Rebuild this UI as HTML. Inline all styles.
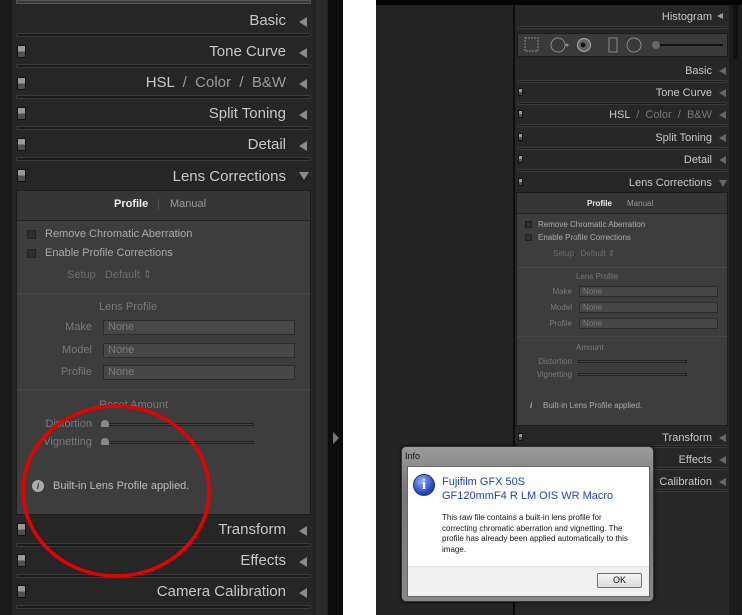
<!DOCTYPE html>
<html><head><meta charset="utf-8"><style>
*{margin:0;padding:0;box-sizing:border-box}
body{width:742px;height:615px;overflow:hidden;background:#fff;position:relative;font-family:"Liberation Sans",sans-serif}
.a{position:absolute}
.t{position:absolute;white-space:nowrap}
.hl{position:absolute;text-align:right;color:#c8c8c8}
.sep{position:absolute;border:1px solid #3a3a3a;border-radius:2px;background:#1a1a1a}
.sw{position:absolute;background:linear-gradient(#9a9a9a 50%,#505050 50%);border:1px solid #111}
.tri{position:absolute;width:0;height:0;border-top:5px solid transparent;border-bottom:5px solid transparent;border-right:8px solid #8a8a8a}
.cb{position:absolute;border:1px solid #222;background:#303030}
.sel{position:absolute;border:1px solid #2c2c2c;background:#474747;color:#7b7b7b}
.lb{position:absolute;text-align:right;color:#7a7a7a}
</style></head><body>
<!-- LEFT -->
<div class="a" style="left:0;top:0;width:343px;height:615px;background:#222"></div>
<div class="a" style="left:0;top:0;width:12px;height:615px;background:#1a1a1a"></div>
<div class="a" style="left:12px;top:0;width:300px;height:615px;background:#262626"></div>
<div class="a" style="left:316px;top:0;width:11px;height:615px;background:#2a2a2a"></div>
<div class="a" style="left:328px;top:0;width:15px;height:615px;background:#0c0c0c"></div>
<div class="a" style="left:333px;top:432px;width:0;height:0;border-top:6px solid transparent;border-bottom:6px solid transparent;border-left:6px solid #777"></div>
<div class="a" style="left:16px;top:0;width:295px;height:4px;background:#3a3a3a;border:1px solid #555"></div>

<div style="font-size:15px">
<div class="hl" style="right:456px;top:12px">Basic</div>
<div class="hl" style="right:456px;top:43px">Tone Curve</div>
<div class="hl" style="right:456px;top:74px;color:#9a9a9a"><span style="color:#c8c8c8">HSL</span> &nbsp;/&nbsp; Color &nbsp;/&nbsp; B&amp;W</div>
<div class="hl" style="right:456px;top:105px">Split Toning</div>
<div class="hl" style="right:456px;top:136px">Detail</div>
<div class="hl" style="right:456px;top:168px">Lens Corrections</div>
<div class="hl" style="right:456px;top:521px">Transform</div>
<div class="hl" style="right:456px;top:552px">Effects</div>
<div class="hl" style="right:456px;top:583px">Camera Calibration</div>
</div>
<div class="tri" style="left:299px;top:17px"></div>
<div class="tri" style="left:299px;top:48px"></div>
<div class="tri" style="left:299px;top:79px"></div>
<div class="tri" style="left:299px;top:110px"></div>
<div class="tri" style="left:299px;top:141px"></div>
<div class="a" style="left:299px;top:172px;border-left:5px solid transparent;border-right:5px solid transparent;border-top:8px solid #8a8a8a"></div>
<div class="tri" style="left:299px;top:526px"></div>
<div class="tri" style="left:299px;top:557px"></div>
<div class="tri" style="left:299px;top:588px"></div>
<div class="sep" style="left:16px;top:33px;width:295px;height:4px"></div>
<div class="sep" style="left:16px;top:64px;width:295px;height:4px"></div>
<div class="sep" style="left:16px;top:95px;width:295px;height:4px"></div>
<div class="sep" style="left:16px;top:126px;width:295px;height:4px"></div>
<div class="sep" style="left:16px;top:157px;width:295px;height:4px"></div>
<div class="sep" style="left:16px;top:543px;width:295px;height:4px"></div>
<div class="sep" style="left:16px;top:574px;width:295px;height:4px"></div>
<div class="sep" style="left:16px;top:605px;width:295px;height:4px"></div>
<div class="sw" style="left:17px;top:45px;width:9px;height:13px"></div>
<div class="sw" style="left:17px;top:77px;width:9px;height:13px"></div>
<div class="sw" style="left:17px;top:107px;width:9px;height:13px"></div>
<div class="sw" style="left:17px;top:138px;width:9px;height:13px"></div>
<div class="sw" style="left:17px;top:169px;width:9px;height:13px"></div>
<div class="sw" style="left:17px;top:523px;width:9px;height:13px"></div>
<div class="sw" style="left:17px;top:554px;width:9px;height:13px"></div>
<div class="sw" style="left:17px;top:585px;width:9px;height:13px"></div>

<div class="a" style="left:16px;top:190px;width:295px;height:325px;background:#3d3d3d;border:1px solid #1c1c1c"></div>
<div class="a" style="left:17px;top:191px;width:293px;height:30px;background:#363636;border-bottom:1px solid #222"></div>
<div class="t" style="left:114px;top:198px;font-size:11px;color:#eee;font-weight:bold">Profile</div>
<div class="t" style="left:157px;top:198px;font-size:11px;color:#555">|</div>
<div class="t" style="left:170px;top:198px;font-size:11px;color:#9a9a9a">Manual</div>
<div style="font-size:11px">
<div class="cb" style="left:27px;top:230px;width:9px;height:9px"></div>
<div class="t" style="left:45px;top:228px;color:#aaa">Remove Chromatic Aberration</div>
<div class="cb" style="left:27px;top:249px;width:9px;height:9px"></div>
<div class="t" style="left:45px;top:247px;color:#aaa">Enable Profile Corrections</div>
<div class="t" style="left:67px;top:268px;color:#6e6e6e">Setup &nbsp; Default ⇕</div>
<div class="a" style="left:17px;top:293px;width:293px;height:1px;background:#474747"></div>
<div class="t" style="left:99px;top:301px;color:#7a7a7a">Lens Profile</div>
<div class="lb" style="right:650px;top:321px">Make</div>
<div class="lb" style="right:650px;top:344px">Model</div>
<div class="lb" style="right:650px;top:366px">Profile</div>
<div class="sel" style="left:103px;top:320px;width:192px;height:15px;padding-left:4px;line-height:13px">None</div>
<div class="sel" style="left:103px;top:343px;width:192px;height:15px;padding-left:4px;line-height:13px">None</div>
<div class="sel" style="left:103px;top:365px;width:192px;height:15px;padding-left:4px;line-height:13px">None</div>
<div class="a" style="left:17px;top:389px;width:293px;height:1px;background:#474747"></div>
<div class="t" style="left:99px;top:399px;color:#7a7a7a">Reset Amount</div>
<div class="lb" style="right:650px;top:418px">Distortion</div>
<div class="lb" style="right:650px;top:436px">Vignetting</div>
<div class="a" style="left:101px;top:423px;width:153px;height:3px;border:1px solid #222;border-radius:2px;background:#444"></div>
<div class="a" style="left:101px;top:441px;width:153px;height:3px;border:1px solid #222;border-radius:2px;background:#444"></div>
<div class="a" style="left:101px;top:420px;width:8px;height:7px;border-radius:4px 4px 1px 1px;background:#8a8a8a"></div>
<div class="a" style="left:101px;top:438px;width:8px;height:7px;border-radius:4px 4px 1px 1px;background:#8a8a8a"></div>
<div class="a" style="left:32px;top:480px;width:12px;height:12px;border-radius:50%;background:#aaa;color:#3d3d3d;font-size:9px;font-style:italic;font-weight:bold;text-align:center;line-height:12px">i</div>
<div class="t" style="left:53px;top:480px;color:#bbb">Built-in Lens Profile applied.</div>
</div>
<svg class="a" style="left:0;top:0" width="345" height="615"><ellipse cx="116" cy="491" rx="93" ry="85" fill="none" stroke="#e60000" stroke-width="3.5"/></svg>

<!-- RIGHT -->
<div class="a" style="left:376px;top:0;width:366px;height:615px;background:#242424"></div>
<div class="a" style="left:376px;top:0;width:366px;height:5px;background:#050505"></div>
<div class="a" style="left:513px;top:5px;width:2px;height:610px;background:#0e0e0e"></div>
<div class="a" style="left:515px;top:5px;width:214px;height:610px;background:#272727"></div>
<div class="a" style="left:729px;top:5px;width:13px;height:610px;background:#1c1c1c"></div>
<div class="a" style="left:733px;top:5px;width:5px;height:54px;background:#111"></div>
<div style="font-size:11px">
<div class="hl" style="right:30px;top:11px">Histogram</div>
<div class="hl" style="right:30px;top:65px">Basic</div>
<div class="hl" style="right:30px;top:87px">Tone Curve</div>
<div class="hl" style="right:30px;top:109px;color:#777"><span style="color:#c8c8c8">HSL</span> &nbsp;/&nbsp; Color &nbsp;/&nbsp; B&amp;W</div>
<div class="hl" style="right:30px;top:132px">Split Toning</div>
<div class="hl" style="right:30px;top:154px">Detail</div>
<div class="hl" style="right:30px;top:177px">Lens Corrections</div>
<div class="hl" style="right:30px;top:432px">Transform</div>
<div class="hl" style="right:30px;top:454px">Effects</div>
<div class="hl" style="right:30px;top:476px">Calibration</div>
</div>
<div style="position:absolute;left:0;top:0">
<div class="tri" style="left:717px;top:13px;border-width:3px 0 3px 6px;border-right:6px solid #999;border-top:3px solid transparent;border-bottom:3px solid transparent"></div>
</div>
<div class="tri" style="left:719px;top:67px;border-right-width:7px;border-top-width:4px;border-bottom-width:4px;border-right-color:#666"></div>
<div class="tri" style="left:719px;top:89px;border-right-width:7px;border-top-width:4px;border-bottom-width:4px;border-right-color:#666"></div>
<div class="tri" style="left:719px;top:111px;border-right-width:7px;border-top-width:4px;border-bottom-width:4px;border-right-color:#666"></div>
<div class="tri" style="left:719px;top:134px;border-right-width:7px;border-top-width:4px;border-bottom-width:4px;border-right-color:#666"></div>
<div class="tri" style="left:719px;top:156px;border-right-width:7px;border-top-width:4px;border-bottom-width:4px;border-right-color:#666"></div>
<div class="a" style="left:719px;top:180px;border-left:4px solid transparent;border-right:4px solid transparent;border-top:7px solid #666"></div>
<div class="tri" style="left:719px;top:434px;border-right-width:7px;border-top-width:4px;border-bottom-width:4px;border-right-color:#666"></div>
<div class="tri" style="left:719px;top:456px;border-right-width:7px;border-top-width:4px;border-bottom-width:4px;border-right-color:#666"></div>
<div class="tri" style="left:719px;top:478px;border-right-width:7px;border-top-width:4px;border-bottom-width:4px;border-right-color:#666"></div>
<div class="sep" style="left:517px;top:26px;width:210px;height:3px"></div>
<div class="sep" style="left:517px;top:80px;width:210px;height:3px"></div>
<div class="sep" style="left:517px;top:102px;width:210px;height:3px"></div>
<div class="sep" style="left:517px;top:124px;width:210px;height:3px"></div>
<div class="sep" style="left:517px;top:147px;width:210px;height:3px"></div>
<div class="sep" style="left:517px;top:169px;width:210px;height:3px"></div>
<div class="sep" style="left:517px;top:445px;width:210px;height:3px"></div>
<div class="sep" style="left:517px;top:467px;width:210px;height:3px"></div>
<div class="sep" style="left:517px;top:489px;width:210px;height:3px"></div>
<div class="sw" style="left:518px;top:88px;width:5px;height:8px"></div>
<div class="sw" style="left:518px;top:110px;width:5px;height:8px"></div>
<div class="sw" style="left:518px;top:133px;width:5px;height:8px"></div>
<div class="sw" style="left:518px;top:155px;width:5px;height:8px"></div>
<div class="sw" style="left:518px;top:178px;width:5px;height:8px"></div>
<div class="sw" style="left:518px;top:433px;width:5px;height:8px"></div>
<!-- toolbar -->
<div class="a" style="left:517px;top:33px;width:211px;height:24px;background:#3a3a3a;border:1px solid #1c1c1c"></div>
<svg class="a" style="left:517px;top:33px" width="211" height="24">
<g fill="none" stroke="#888" stroke-width="1">
<rect x="8" y="5" width="13" height="13" stroke-dasharray="2 1"/>
<circle cx="41" cy="12" r="7"/><circle cx="50" cy="12" r="1" fill="#888"/>
<circle cx="67" cy="12" r="6.5" fill="#666" stroke="#aaa"/>
<rect x="92" y="5" width="8" height="14"/>
<circle cx="117" cy="12" r="7"/>
<line x1="140" y1="12" x2="206" y2="12" stroke="#111" stroke-width="2"/>
</g>
<circle cx="66" cy="12" r="2.5" fill="#111"/>
<circle cx="139" cy="12" r="4" fill="#666"/>
</svg>
<!-- content -->
<div class="a" style="left:516px;top:192px;width:212px;height:234px;background:#3d3d3d;border:1px solid #1c1c1c"></div>
<div class="a" style="left:517px;top:193px;width:210px;height:21px;background:#363636;border-bottom:1px solid #222"></div>
<div style="font-size:8px">
<div class="t" style="left:587px;top:199px;color:#eee;font-weight:bold">Profile</div>
<div class="t" style="left:627px;top:199px;color:#999">Manual</div>
<div class="cb" style="left:525px;top:221px;width:7px;height:7px"></div>
<div class="t" style="left:538px;top:220px;color:#aaa">Remove Chromatic Aberration</div>
<div class="cb" style="left:525px;top:234px;width:7px;height:7px"></div>
<div class="t" style="left:538px;top:233px;color:#aaa">Enable Profile Corrections</div>
<div class="t" style="left:553px;top:249px;color:#6e6e6e">Setup &nbsp; Default ⇕</div>
<div class="a" style="left:517px;top:267px;width:210px;height:1px;background:#474747"></div>
<div class="t" style="left:576px;top:272px;color:#7a7a7a">Lens Profile</div>
<div class="lb" style="right:170px;top:287px">Make</div>
<div class="lb" style="right:170px;top:303px">Model</div>
<div class="lb" style="right:170px;top:319px">Profile</div>
<div class="sel" style="left:579px;top:286px;width:139px;height:11px;padding-left:3px;line-height:9px">None</div>
<div class="sel" style="left:579px;top:302px;width:139px;height:11px;padding-left:3px;line-height:9px">None</div>
<div class="sel" style="left:579px;top:318px;width:139px;height:11px;padding-left:3px;line-height:9px">None</div>
<div class="a" style="left:517px;top:336px;width:210px;height:1px;background:#474747"></div>
<div class="t" style="left:576px;top:343px;color:#7a7a7a">Amount</div>
<div class="lb" style="right:170px;top:357px">Distortion</div>
<div class="lb" style="right:170px;top:370px">Vignetting</div>
<div class="a" style="left:578px;top:360px;width:109px;height:3px;border:1px solid #222;background:#444"></div>
<div class="a" style="left:578px;top:373px;width:109px;height:3px;border:1px solid #222;background:#444"></div>
<div class="t" style="left:530px;top:401px;color:#aaa;font-style:italic;font-weight:bold">i</div>
<div class="t" style="left:543px;top:401px;color:#aaa">Built-in Lens Profile applied.</div>
</div>
<!-- dialog -->
<div class="a" style="left:401px;top:446px;width:253px;height:156px;background:linear-gradient(#9a9a9a,#777 30%,#888);border:1px solid #333;border-radius:5px;box-shadow:0 0 3px #000"></div>
<div class="t" style="left:405px;top:451px;font-size:9px;color:#111">Info</div>
<div class="a" style="left:407px;top:466px;width:243px;height:131px;background:#fff;border:1px solid #666"></div>
<div class="a" style="left:408px;top:566px;width:241px;height:30px;background:#f0f0f0;border-top:1px solid #ddd"></div>
<div class="a" style="left:413px;top:474px;width:22px;height:22px;border-radius:50%;background:radial-gradient(circle at 40% 30%,#8fb0ff,#1d3fb8 70%);border:1px solid #1b2f80;color:#fff;font:bold 15px 'Liberation Serif',serif;text-align:center;line-height:21px">i</div>
<div class="t" style="left:442px;top:475px;font-size:11px;color:#1f3fbf;line-height:14px">Fujifilm GFX 50S<br>GF120mmF4 R LM OIS WR Macro</div>
<div class="t" style="left:442px;top:513px;font-size:8px;color:#111;line-height:10.5px">This raw file contains a built-in lens profile for<br>correcting chromatic aberration and vignetting. The<br>profile has already been applied automatically to this<br>image.</div>
<div class="a" style="left:597px;top:573px;width:45px;height:15px;border:1px solid #3c7fb1;border-radius:2px;background:linear-gradient(#f2f2f2,#dcdcdc);font-size:9px;text-align:center;line-height:13px;color:#111">OK</div>
</body></html>
